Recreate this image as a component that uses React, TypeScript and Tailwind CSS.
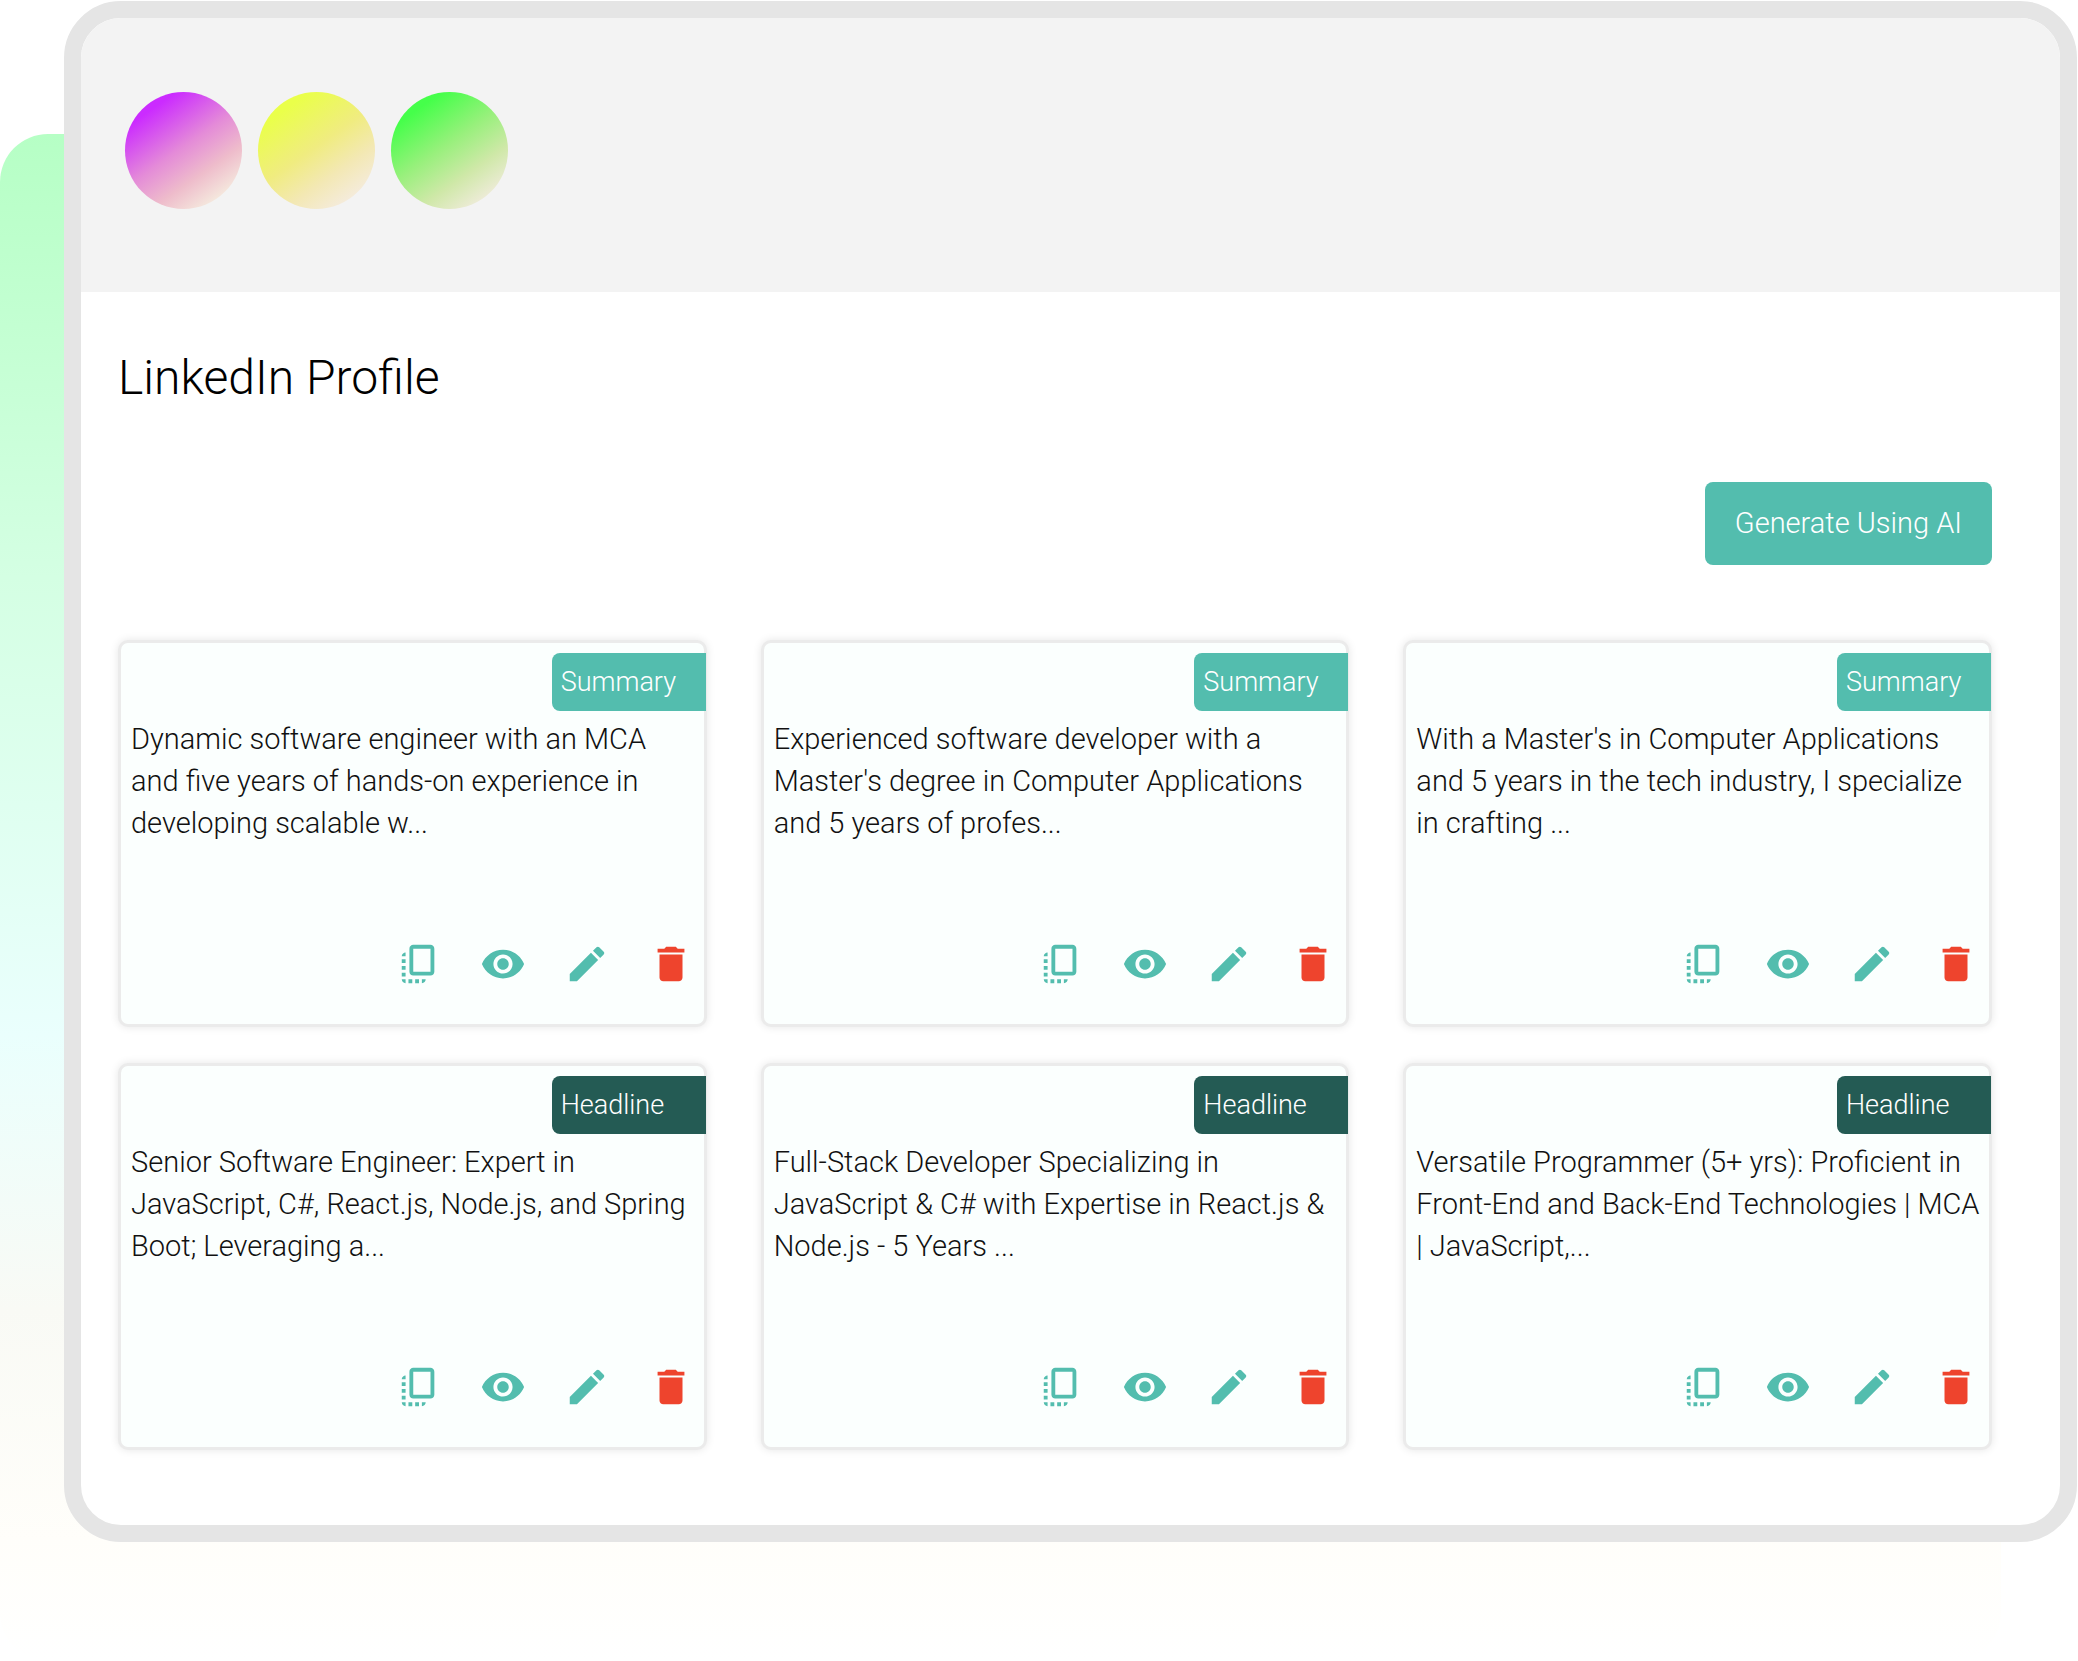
import { MdCopyAll, MdDelete, MdEdit, MdVisibility } from "react-icons/md";

interface ProfileItem {
    type: 'Summary' | 'Headline';
    text: string;
}

const ITEMS: ProfileItem[] = [
    { type: 'Summary', text: 'Dynamic software engineer with an MCA and five years of hands-on experience in developing scalable w...' },
    { type: 'Summary', text: "Experienced software developer with a Master's degree in Computer Applications and 5 years of profes..." },
    { type: 'Summary', text: "With a Master's in Computer Applications and 5 years in the tech industry, I specialize in crafting ..." },
    { type: 'Headline', text: 'Senior Software Engineer: Expert in JavaScript, C#, React.js, Node.js, and Spring Boot; Leveraging a...' },
    { type: 'Headline', text: 'Full-Stack Developer Specializing in JavaScript & C# with Expertise in React.js & Node.js - 5 Years ...' },
    { type: 'Headline', text: 'Versatile Programmer (5+ yrs): Proficient in Front-End and Back-End Technologies | MCA | JavaScript,...' },
];

const BADGE_COLOR: Record<ProfileItem['type'], string> = {
    Summary: 'bg-[#53bdae]',
    Headline: 'bg-[#245b54]',
};

const DOTS = [
    'bg-[linear-gradient(145deg,#cb2bff_18%,#e48bd8_48%,#eebccb_68%,#f6f1e1_90%)]',
    'bg-[linear-gradient(145deg,#eaff4a_18%,#f0ec80_48%,#f3e8b4_68%,#f5ece3_90%)]',
    'bg-[linear-gradient(145deg,#45ff4a_18%,#98f07c_46%,#cfe8a8_68%,#f3ece0_90%)]',
];

function ProfileCard({ item }: { item: ProfileItem }) {
    return (
        <article className="flex h-[387px] flex-col rounded-[10px] border-[3px] border-[#ebebeb] bg-[#fbfffe] shadow-[0_0_8px_rgba(0,0,0,0.1)]">
            <span className={`-mr-[2px] mt-[10px] flex h-[58px] w-[154px] items-center self-end rounded-l-lg pl-[9px] text-[27px] font-light text-white ${BADGE_COLOR[item.type]}`}>
                {item.type}
            </span>
            <p className="pt-[7px] pr-2 pl-[10px] text-[29px] leading-[42px] font-light text-[#111]">{item.text}</p>

            {/* Actions */}
            <div className="mt-auto mb-[37px] flex justify-end gap-[38px] pr-[10px] text-[46px] text-[#53bdae]">
                <button type="button" aria-label="Copy"><MdCopyAll /></button>
                <button type="button" aria-label="View"><MdVisibility /></button>
                <button type="button" aria-label="Edit"><MdEdit /></button>
                <button type="button" aria-label="Delete" className="text-[#ee442d]"><MdDelete /></button>
            </div>
        </article>
    );
}

export default function App() {
    return (
        <div className="relative min-h-screen bg-white pt-px pr-px pl-[64px] pb-[119px] font-['Roboto',sans-serif]">
            {/* Gradient backdrop */}
            <div className="absolute top-[134px] right-[77px] bottom-0 left-0 rounded-[48px] bg-[linear-gradient(to_bottom,#b6ffc5_0%,#d4ffe3_29%,#eafffd_59%,#f9faf5_77%,#fffefa_92%,#ffffff_100%)]" />

            <main className="relative overflow-hidden rounded-[57px] border-[17px] border-[#e5e5e5] bg-white">
                <header className="flex h-[274px] gap-4 bg-[#f3f3f3] pt-[74px] pl-[44px]">
                    {DOTS.map((dot) => (
                        <span key={dot} className={`size-[117px] rounded-full ${dot}`} />
                    ))}
                </header>

                <div className="pt-[57px] pr-[68px] pb-[75px] pl-[37px]">
                    <h1 className="text-[48px] leading-[58px] font-light text-black">LinkedIn Profile</h1>
                    <div className="mt-[75px] flex justify-end">
                        <button type="button" className="h-[83px] rounded-lg bg-[#53bdae] px-[30px] text-[29px] font-light text-white">
                            Generate Using AI
                        </button>
                    </div>
                    <div className="mt-[75px] grid grid-cols-3 gap-x-[54px] gap-y-[36px]">
                        {ITEMS.map((item) => (
                            <ProfileCard key={item.text} item={item} />
                        ))}
                    </div>
                </div>
            </main>
        </div>
    );
}
